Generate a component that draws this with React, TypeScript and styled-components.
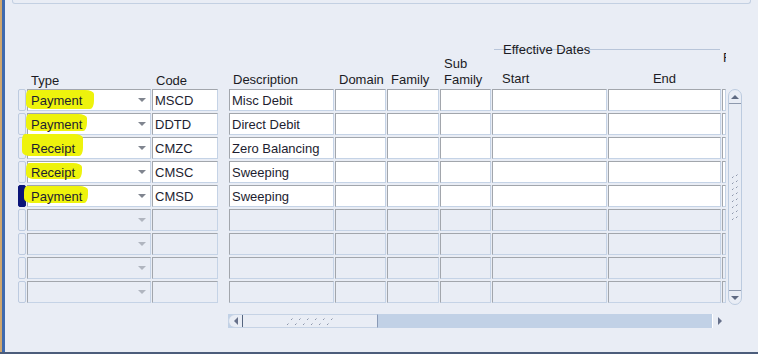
import React from 'react';
import styled, { createGlobalStyle } from 'styled-components';

const GlobalStyle = createGlobalStyle`
  html, body {
    margin: 0;
    padding: 0;
    background: #e9edf5;
  }
  body {
    font-family: 'Liberation Sans', Arial, sans-serif;
    font-size: 13px;
    color: #1b1b24;
  }
`;

// ind | type | code | desc (10px lead) | domain | family | sub | start | end | partial
const COLS = '8px 124px 66px 115px 51px 52px 51px 115px 113px 4px';

const Window = styled.div`
  width: 758px;
  height: 354px;
  box-sizing: border-box;
  background: #e9edf5;
  border-bottom: 2px solid #4c5d7b;
  box-shadow: inset 2px 0 #cfa66e, inset 5px 0 #3f6aae;
  overflow: hidden;
`;

const TopPanel = styled.div`
  height: 3px;
  margin: 0 7px 0 12px;
  border: 1px solid #c3d0e2;
  border-top: none;
  border-radius: 0 0 3px 3px;
`;

const Content = styled.div`
  padding-left: 18px;
`;

const HeaderGrid = styled.div`
  display: grid;
  grid-template-columns: ${COLS};
  column-gap: 1px;
  height: 85px;
  align-items: end;
  line-height: 16px;
`;

const HeadCell = styled.div<{ $pad: number; $col?: number }>`
  padding: 0 0 ${(p) => p.$pad}px 4px;
  white-space: nowrap;
  ${(p) => (p.$col ? `grid-column: ${p.$col};` : '')}
`;

const DescHead = styled(HeadCell)`
  padding-left: 14px;
`;

const Group = styled.div`
  grid-column: span 2;
  padding-bottom: 2px;
`;

const GroupLabel = styled.div`
  position: relative;
  height: 16px;
  padding-left: 11px;
  margin-bottom: 13px;
  &::before {
    content: '';
    position: absolute;
    left: 2px;
    right: 1px;
    top: 7px;
    height: 1px;
    background: #b8c5d9;
  }
  span {
    position: relative;
  }
`;

const GroupCols = styled.div`
  display: flex;
  gap: 1px;
`;

const GroupCol = styled.div<{ $w: number; $center?: boolean }>`
  width: ${(p) => p.$w}px;
  padding-left: ${(p) => (p.$center ? 0 : 10)}px;
  text-align: ${(p) => (p.$center ? 'center' : 'left')};
  box-sizing: border-box;
`;

const PartialHead = styled.div`
  align-self: start;
  margin-top: 46px;
  padding-left: 1px;
  overflow: hidden;
  white-space: nowrap;
`;

const Body = styled.div`
  display: flex;
  align-items: flex-start;
`;

const RowsGrid = styled.div`
  display: grid;
  grid-template-columns: ${COLS};
  column-gap: 1px;
  row-gap: 2px;
  grid-auto-rows: 22px;
`;

const Indicator = styled.div<{ $active?: boolean }>`
  box-sizing: border-box;
  border: 1px solid ${(p) => (p.$active ? '#0a1478' : '#bdcbe0')};
  border-radius: 2px;
  background: ${(p) => (p.$active ? '#0a1478' : '#e9edf5')};
`;

const Field = styled.div<{ $empty?: boolean; $lead?: number }>`
  position: relative;
  box-sizing: border-box;
  display: flex;
  align-items: center;
  margin-left: ${(p) => p.$lead || 0}px;
  padding-left: 2px;
  border-style: solid;
  border-width: 1px;
  border-color: #a2a6ac #c5d3e6 #c5d3e6 #a2a6ac;
  background: ${(p) => (p.$empty ? '#e9edf5' : '#ffffff')};
  color: #1d1d30;
  white-space: nowrap;
  overflow: visible;
`;

const TypeField = styled(Field)`
  justify-content: space-between;
  padding: 0 4px 0 3px;
`;

const Caret = styled.span<{ $dim?: boolean }>`
  width: 0;
  height: 0;
  border-left: 4px solid transparent;
  border-right: 4px solid transparent;
  border-top: 4px solid ${(p) => (p.$dim ? '#b0b5bf' : '#80858f')};
`;

const Marker = styled.span<{ $x: number; $y: number; $w: number; $h: number }>`
  position: absolute;
  left: ${(p) => p.$x}px;
  top: ${(p) => p.$y}px;
  width: ${(p) => p.$w}px;
  height: ${(p) => p.$h}px;
  background: #eef30c;
  border-radius: 3px 9px 4px 7px / 6px 4px 8px 5px;
`;

const Label = styled.span`
  position: relative;
`;

const VScroll = styled.div`
  box-sizing: border-box;
  width: 14px;
  height: 216px;
  margin-left: 2px;
  border: 1px solid #bccbdf;
  border-radius: 7px;
  background: #e9edf5;
  display: flex;
  flex-direction: column;
`;

const VButton = styled.div<{ $down?: boolean }>`
  height: 13px;
  display: flex;
  justify-content: center;
  align-items: center;
  ${(p) => (p.$down ? 'border-top: 1px solid #8e99ad;' : 'border-bottom: 1px solid #8e99ad;')}
`;

const ArrowV = styled.span<{ $down?: boolean }>`
  width: 0;
  height: 0;
  border-left: 4px solid transparent;
  border-right: 4px solid transparent;
  ${(p) => (p.$down ? 'border-top: 4px solid #5f6a82;' : 'border-bottom: 4px solid #5f6a82;')}
`;

const VMiddle = styled.div`
  flex: 1;
  display: flex;
  justify-content: center;
  align-items: center;
`;

const HScroll = styled.div`
  box-sizing: border-box;
  width: 498px;
  height: 14px;
  margin: 9px 0 0 210px;
  background: #c1d1e6;
  display: flex;
`;

const Thumb = styled.div`
  box-sizing: border-box;
  width: 150px;
  display: flex;
  background: #e9edf5;
  border: 1px solid #c6d3e5;
  border-right-color: #8a9ab6;
  border-radius: 7px 0 0 7px;
`;

const HButton = styled.div<{ $right?: boolean }>`
  box-sizing: border-box;
  width: 14px;
  display: flex;
  justify-content: center;
  align-items: center;
  ${(p) =>
    p.$right
      ? 'margin-left: auto; background: #e9edf5; border-left: 1px solid #ffffff;'
      : 'border-right: 1px solid #55657f;'}
`;

const ArrowH = styled.span<{ $right?: boolean }>`
  width: 0;
  height: 0;
  border-top: 4px solid transparent;
  border-bottom: 4px solid transparent;
  ${(p) => (p.$right ? 'border-left: 4px solid #66708a;' : 'border-right: 4px solid #66708a;')}
`;

const HMiddle = styled.div`
  flex: 1;
  display: flex;
  justify-content: center;
  align-items: center;
`;

type Row = {
  type?: string;
  code?: string;
  desc?: string;
  mark?: [number, number, number, number];
  active?: boolean;
};

const rows: Row[] = [
  { type: 'Payment', code: 'MSCD', desc: 'Misc Debit', mark: [-2, 0, 68, 19] },
  { type: 'Payment', code: 'DDTD', desc: 'Direct Debit', mark: [-2, 0, 61, 17] },
  { type: 'Receipt', code: 'CMZC', desc: 'Zero Balancing', mark: [-6, -4, 61, 22] },
  { type: 'Receipt', code: 'CMSC', desc: 'Sweeping', mark: [-2, 1, 56, 16] },
  { type: 'Payment', code: 'CMSD', desc: 'Sweeping', mark: [-4, 0, 64, 17], active: true },
  {},
  {},
  {},
  {},
];

const GripV: React.FC = () => (
  <svg width="8" height="48" viewBox="0 0 8 48">
    {Array.from({ length: 8 }).map((_, i) => (
      <g key={i} stroke="#8c96ab" strokeWidth="1">
        <path d={`M1 ${i * 6 + 5} l1.5 -1.5`} />
        <path d={`M5 ${i * 6 + 3} l1.5 -1.5`} />
      </g>
    ))}
  </svg>
);

const GripH: React.FC = () => (
  <svg width="46" height="9" viewBox="0 0 46 9">
    {Array.from({ length: 6 }).map((_, i) => (
      <g key={i} stroke="#8c96ab" strokeWidth="1">
        <path d={`M${i * 8 + 4} 3 l1.5 -1.5`} />
        <path d={`M${i * 8} 8 l1.5 -1.5`} />
      </g>
    ))}
  </svg>
);

const App: React.FC = () => {
  return (
    <Window>
      <GlobalStyle />
      <TopPanel />
      <Content>
        <HeaderGrid>
          <HeadCell $pad={0} $col={2}>
            Type
          </HeadCell>
          <HeadCell $pad={0}>Code</HeadCell>
          <DescHead $pad={1}>Description</DescHead>
          <HeadCell $pad={1}>Domain</HeadCell>
          <HeadCell $pad={1}>Family</HeadCell>
          <HeadCell $pad={1}>
            Sub
            <br />
            Family
          </HeadCell>
          <Group>
            <GroupLabel>
              <span>Effective Dates</span>
            </GroupLabel>
            <GroupCols>
              <GroupCol $w={115}>Start</GroupCol>
              <GroupCol $w={113} $center>
                End
              </GroupCol>
            </GroupCols>
          </Group>
          <PartialHead>F</PartialHead>
        </HeaderGrid>

        <Body>
          <RowsGrid>
            {rows.map((r, i) => {
              const empty = !r.type;
              return (
                <React.Fragment key={i}>
                  <Indicator $active={r.active} />
                  <TypeField $empty={empty}>
                    {r.mark && <Marker $x={r.mark[0]} $y={r.mark[1]} $w={r.mark[2]} $h={r.mark[3]} />}
                    <Label>{r.type}</Label>
                    <Caret $dim={empty} />
                  </TypeField>
                  <Field $empty={empty}>{r.code}</Field>
                  <Field $empty={empty} $lead={10}>
                    {r.desc}
                  </Field>
                  <Field $empty={empty} />
                  <Field $empty={empty} />
                  <Field $empty={empty} />
                  <Field $empty={empty} />
                  <Field $empty={empty} />
                  <Field $empty={empty} />
                </React.Fragment>
              );
            })}
          </RowsGrid>
          <VScroll>
            <VButton>
              <ArrowV />
            </VButton>
            <VMiddle>
              <GripV />
            </VMiddle>
            <VButton $down>
              <ArrowV $down />
            </VButton>
          </VScroll>
        </Body>

        <HScroll>
          <Thumb>
            <HButton>
              <ArrowH />
            </HButton>
            <HMiddle>
              <GripH />
            </HMiddle>
          </Thumb>
          <HButton $right>
            <ArrowH $right />
          </HButton>
        </HScroll>
      </Content>
    </Window>
  );
};

export default App;
